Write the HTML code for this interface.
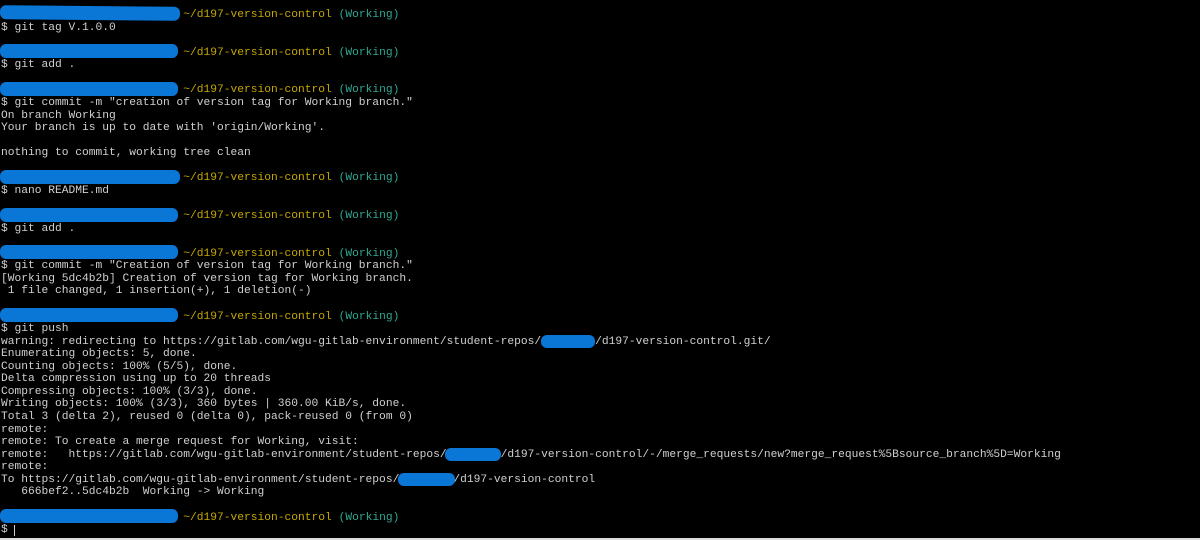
<!DOCTYPE html>
<html><head><meta charset="utf-8"><style>
html,body{margin:0;padding:0;background:#000;width:1200px;height:540px;overflow:hidden;position:relative}
pre{position:absolute;left:1px;top:9px;margin:0;font-family:"Liberation Mono",monospace;font-size:11.25px;line-height:12.56px;color:#d0d0d0;white-space:pre}
.y{color:#c4a800}.c{color:#2fa893}
.b{position:absolute;background:#0a76d6;border-radius:6px}
.cur{position:absolute;left:14px;top:525px;width:1px;height:11px;background:#ccc}
.bot{position:absolute;left:0;top:538px;width:1200px;height:2px;background:#ddd}
</style></head><body>
<pre>                           <span class="y">~/d197-version-control</span> <span class="c">(Working)</span>
$ git tag V.1.0.0

                           <span class="y">~/d197-version-control</span> <span class="c">(Working)</span>
$ git add .

                           <span class="y">~/d197-version-control</span> <span class="c">(Working)</span>
$ git commit -m "creation of version tag for Working branch."
On branch Working
Your branch is up to date with 'origin/Working'.

nothing to commit, working tree clean

                           <span class="y">~/d197-version-control</span> <span class="c">(Working)</span>
$ nano README.md

                           <span class="y">~/d197-version-control</span> <span class="c">(Working)</span>
$ git add .

                           <span class="y">~/d197-version-control</span> <span class="c">(Working)</span>
$ git commit -m "Creation of version tag for Working branch."
[Working 5dc4b2b] Creation of version tag for Working branch.
 1 file changed, 1 insertion(+), 1 deletion(-)

                           <span class="y">~/d197-version-control</span> <span class="c">(Working)</span>
$ git push
warning: redirecting to https://gitlab.com/wgu-gitlab-environment/student-repos/        /d197-version-control.git/
Enumerating objects: 5, done.
Counting objects: 100% (5/5), done.
Delta compression using up to 20 threads
Compressing objects: 100% (3/3), done.
Writing objects: 100% (3/3), 360 bytes | 360.00 KiB/s, done.
Total 3 (delta 2), reused 0 (delta 0), pack-reused 0 (from 0)
remote:
remote: To create a merge request for Working, visit:
remote:   https://gitlab.com/wgu-gitlab-environment/student-repos/        /d197-version-control/-/merge_requests/new?merge_request%5Bsource_branch%5D=Working
remote:
To https://gitlab.com/wgu-gitlab-environment/student-repos/        /d197-version-control
   666bef2..5dc4b2b  Working -> Working

                           <span class="y">~/d197-version-control</span> <span class="c">(Working)</span>
$ </pre>
<div class="b" style="left:0;top:6px;width:180px;height:14px;transform:rotate(0.5deg)"></div>
<div class="b" style="left:0;top:44px;width:178px;height:14px"></div>
<div class="b" style="left:0;top:82px;width:178px;height:14px"></div>
<div class="b" style="left:0;top:170px;width:180px;height:14px"></div>
<div class="b" style="left:0;top:208px;width:178px;height:14px"></div>
<div class="b" style="left:0;top:245px;width:178px;height:14px"></div>
<div class="b" style="left:0;top:308px;width:178px;height:14px"></div>
<div class="b" style="left:0;top:509px;width:178px;height:14px"></div>
<div class="b" style="left:541px;top:335px;width:54px;height:13px"></div>
<div class="b" style="left:445px;top:448px;width:56px;height:13px"></div>
<div class="b" style="left:398px;top:473px;width:57px;height:13px"></div>
<div class="cur"></div>
<div class="bot"></div>
</body></html>
